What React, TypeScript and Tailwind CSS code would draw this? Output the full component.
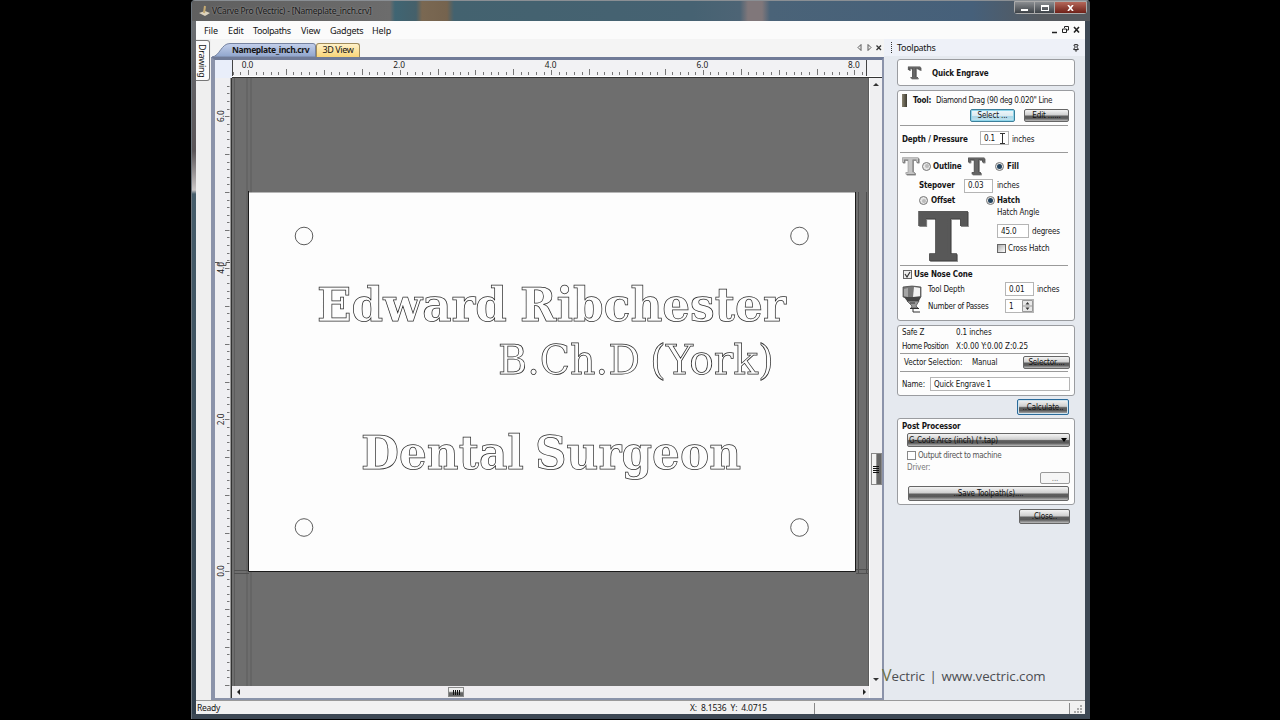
import React from 'react'
import { Pin } from 'lucide-react'

const SCALE = 75.8

// one entry per word so the outlines keep their own spacing
const cutText = [
  { text: 'Edward', x: 317, y: 320.5, size: 46.5, length: 190, bold: true },
  { text: 'Ribchester', x: 520, y: 320.5, size: 46.5, length: 266, bold: true },
  { text: 'B.Ch.D', x: 498, y: 373.5, size: 41, length: 142, bold: false },
  { text: '(York)', x: 650, y: 373.5, size: 41, length: 124, bold: false },
  { text: 'Dental', x: 361, y: 468.5, size: 46.5, length: 163, bold: true },
  { text: 'Surgeon', x: 535, y: 468.5, size: 46.5, length: 206, bold: true },
]

const holes = [[304, 236], [799.5, 236], [304, 527.5], [799.5, 527.5]]

function HRuler() {
  const ticks = Array.from({ length: 84 }, (_, i) => i - 2)
  return (
    <svg width="650" height="18" viewBox="232 60 650 18" className="block bg-[#f2f2f4]">
      {ticks.map(i => {
        const x = Math.round(248 + i * SCALE / 10) + .5
        return <line key={i} x1={x} x2={x} y1={i % 10 === 0 ? 70 : i % 5 === 0 ? 69 : 72} y2="75" stroke="#555" strokeWidth=".8"/>
      })}
      {[0, 2, 4, 6, 8].map(n => (
        <text key={n} x={247.5 + n * SCALE} y="68" fontSize="8.3" textAnchor="middle" fill="#222">{n.toFixed(1)}</text>
      ))}
      <rect x="867" y="60" width="15" height="17" fill="#f3f3f5"/>
      <path d="M866.5 60V77M232.5 60V77" stroke="#444" strokeWidth="1"/>
      <path d="M232 76.5H882" stroke="#fff"/>
      <path d="M232 77.5H882" stroke="#333"/>
    </svg>
  )
}

function VRuler() {
  const ticks = Array.from({ length: 80 }, (_, i) => i - 15)
  return (
    <svg width="17" height="620" viewBox="215 78 17 620" className="block bg-[#efeff2]">
      {ticks.map(i => {
        const y = Math.round(571 - i * SCALE / 10) + .5
        return <line key={i} y1={y} y2={y} x1={i % 5 === 0 ? 225 : 227} x2="229.5" stroke="#555" strokeWidth=".8"/>
      })}
      {[0, 2, 4, 6].map(n => (
        <text key={n} transform={`translate(224 ${571 - n * SCALE}) rotate(-90)`} fontSize="8.3" textAnchor="middle" fill="#222">{n.toFixed(1)}</text>
      ))}
      <path d="M215 262.5h4v3h7v-3h4" stroke="#555" fill="none"/>
      <path d="M230.5 78V698" stroke="#999"/>
      <path d="M231.5 78V698" stroke="#333"/>
    </svg>
  )
}

function Drawing() {
  return (
    <svg width="637" height="608" viewBox="232 78 637 608" className="block bg-[#6e6e6e]">
      <path d="M234.5 78V686M247 78V686M251 78V686M868.5 78V686" stroke="#5c5c5c"/>
      <path d="M858.5 192V574M866.5 192V574" stroke="#4e4e4e"/>
      <path d="M234 570.5H249M234 573.5H249M856 569.5H868M856 573.5H868" stroke="#505050"/>
      <rect x="248.5" y="192.5" width="606.5" height="379" fill="#fdfdfd"/>
      <path d="M248.5 191V571.5H855.5V192" fill="none" stroke="#1a1a1a"/>
      {holes.map(([x, y]) => <circle key={`${x}-${y}`} cx={x} cy={y} r="8.8" fill="none" stroke="#333" strokeWidth=".8"/>)}
      {cutText.map(t => (
        <text key={t.text} x={t.x} y={t.y} fontSize={t.size} textLength={t.length} lengthAdjust="spacingAndGlyphs"
          fontWeight={t.bold ? 700 : 400} fill="#fdfdfd" stroke="#2c2c2c" strokeWidth=".75"
          className="font-['DejaVu_Serif',serif] opacity-99">{t.text}</text>
      ))}
    </svg>
  )
}

function LetterIcon({ w, h, fill, edge = 2 }: { w: number, h: number, fill: string, edge?: number }) {
  return (
    <svg width={w} height={h} viewBox="0 0 50 55" preserveAspectRatio="none" className="block shrink-0 overflow-visible [filter:drop-shadow(0_0_0.6px_#000)_drop-shadow(1px_1px_0_#8a8a8a)]">
      <text x="0.5" y="51.5" fontSize="68" fontWeight="700" textLength="47" lengthAdjust="spacingAndGlyphs" fill={fill} stroke={fill} strokeWidth={edge} className="font-['DejaVu_Serif',serif]">T</text>
    </svg>
  )
}

function NoseCone() {
  return (
    <svg width="21" height="28" viewBox="0 0 21 28" className="block shrink-0">
      <path d="M1 2Q10 0 19 2V12Q10 15 1 12Z" fill="#777" stroke="#444" strokeWidth=".7"/>
      <path d="M12 2L18 3V11L11 12Z" fill="#f2f2f2"/>
      <path d="M2 4L6 3V12L2 11Z" fill="#a5a5a5"/>
      <path d="M2 12L19 12L17 16L5 16Z" fill="#444"/>
      <path d="M5 16H17L14 21L16 23H9L10 21Z" fill="#999" stroke="#444" strokeWidth=".7"/>
      <path d="M8 18H13M8 23.500H17M11 23V27M11 27H18" stroke="#333"/>
    </svg>
  )
}

function Radio({ on = false }: { on?: boolean }) {
  return (
    <span className="w-[9px] h-[9px] shrink-0 rounded-full border border-[#777] bg-[#e6e6e6] flex items-center justify-center">
      <span className={on ? 'w-[5px] h-[5px] rounded-full bg-[#24435e]' : 'w-[4px] h-[4px] rounded-full bg-[#bbb]'}/>
    </span>
  )
}

function Field({ children, className = '' }: { children: React.ReactNode, className?: string }) {
  return <div className={`h-[14px] shrink-0 border border-[#b5b5b5] bg-white flex items-center pl-[3px] ${className}`}>{children}</div>
}

function Btn({ children, className = '' }: { children: React.ReactNode, className?: string }) {
  return (
    <button className={`shrink-0 rounded-[2px] border border-[#666] flex items-center justify-center text-[#111] bg-[linear-gradient(#f4f4f4_0%,#cfcfcf_45%,#5e5e5e_55%,#5a5a5a_75%,#bdbdbd_100%)] ${className}`}>
      {children}
    </button>
  )
}

const card = 'w-[178px] rounded-[3px] border border-[#9a9ca0] bg-[#fdfdfd]'
const rule = 'h-px bg-[#9a9a9a] ml-[2px] mr-[6px]'

function ToolpathPanel() {
  return (
    <div className="w-[201px] h-[661px] bg-[#e5e9ef] text-[8px] leading-[9px] tracking-[-0.15px] font-['DejaVu_Sans_Condensed','DejaVu_Sans',sans-serif]">
      <div className="h-[17px] flex items-center bg-[#eef1f8] pl-[7px] pr-[5px]">
        <span className="h-[11px] border-l border-dotted border-[#333] mr-[5px]"/>
        <span className="text-[9px] tracking-[-0.3px] font-['Noto_Sans',sans-serif]">Toolpaths</span>
        <Pin className="w-[8px] h-[8px] ml-auto" strokeWidth={3}/>
      </div>

      <div className="ml-[13px] mt-[3px]">
        <div className={`${card} h-[27px] flex items-center pl-[10px] pt-px`}>
          <LetterIcon w={13} h={12} fill="#666"/>
          <b className="ml-[11px] pt-px">Quick Engrave</b>
        </div>

        {/* Tool settings */}
        <div className={`${card} h-[231px] mt-[4px]`}>
          <div className="h-[18px] flex items-center pl-[4px]">
            <span className="w-[5px] h-[13px] bg-[linear-gradient(90deg,#8a8471,#3d3a30)]"/>
            <b className="ml-[6px] w-[23px]">Tool:</b>
            <span className="tracking-[-0.3px]">Diamond Drag (90 deg 0.020" Line</span>
          </div>
          <div className="h-[16px] flex items-start pl-[72px] gap-[9px]">
            <button className="w-[45px] h-[13px] rounded-[2px] border border-[#3c7f9a] flex items-center justify-center bg-[linear-gradient(#eef8fc_0%,#dcebf1_50%,#a9d5e6_60%,#c6e6f0_100%)] shadow-[inset_0_0_0_1px_#8ed5ea]">Select ...</button>
            <Btn className="w-[45px] h-[13px]">Edit ......</Btn>
          </div>
          <div className={rule}/>
          <div className="h-[26px] flex items-center pl-[4px]">
            <b className="w-[78px] tracking-0">Depth / Pressure</b>
            <Field className="w-[29px] relative -top-px">0.1
              <svg width="5" height="11" className="absolute left-[19px] top-[1px]"><path d="M0 .5H5M0 10.5H5M2.5 0V11" stroke="#333" strokeWidth="1"/></svg>
            </Field>
            <span className="ml-[3px]">inches</span>
          </div>
          <div className={rule}/>
          <div className="h-[25px] flex items-center pl-[4px] pt-px">
            <LetterIcon w={17} h={18} fill="#c4c4c4"/>
            <span className="w-[3px]"/>
            <Radio/>
            <b className="ml-[2px] w-[35px]">Outline</b>
            <LetterIcon w={17} h={18} fill="#666"/>
            <span className="w-[10px]"/>
            <Radio on/>
            <b className="ml-[3px]">Fill</b>
          </div>
          <div className="h-[15px] flex items-center pl-[21px]">
            <b className="w-[45px]">Stepover</b>
            <Field className="w-[29px]">0.03</Field>
            <span className="ml-[4px]">inches</span>
          </div>
          <div className="h-[15px] flex items-center pl-[21px]">
            <Radio/>
            <b className="ml-[3px] w-[55px]">Offset</b>
            <Radio on/>
            <b className="ml-[2px]">Hatch</b>
          </div>
          <div className="h-[57px] flex pl-[21px]">
            <div className="mt-[2px] w-[78px]"><LetterIcon w={50} h={52} fill="#585858" edge={3.5}/></div>
            <div>
              <div className="h-[10px] leading-[10px]">Hatch Angle</div>
              <div className="flex items-center mt-[6px]">
                <Field className="w-[32px]">45.0</Field>
                <span className="ml-[3px]">degrees</span>
              </div>
              <div className="flex items-center mt-[6px]">
                <span className="w-[9px] h-[9px] border border-[#666] bg-[linear-gradient(135deg,#aaa,#fff)]"/>
                <span className="ml-[2px]">Cross Hatch</span>
              </div>
            </div>
          </div>
          <div className={rule}/>
          <div className="h-[15px] flex items-center pl-[5px] pt-px">
            <span className="w-[9px] h-[9px] border border-[#666] bg-[#eee] flex items-center justify-center">
              <svg width="7" height="7" viewBox="0 0 7 7"><path d="M1 3L3 6L6 1" stroke="#333" strokeWidth="1.2" fill="none"/></svg>
            </span>
            <b className="ml-[2px]">Use Nose Cone</b>
          </div>
          <div className="flex pl-[4px] pt-px">
            <div className="pt-[3px] w-[26px]"><NoseCone/></div>
            <div>
              <div className="flex items-center h-[14px]">
                <span className="w-[77px]">Tool Depth</span>
                <Field className="w-[29px]">0.01</Field>
                <span className="ml-[3px]">inches</span>
              </div>
              <div className="flex items-center h-[14px] mt-[3px]">
                <span className="w-[77px] tracking-[-0.25px]">Number of Passes</span>
                <Field className="w-[29px]">1
                  <svg width="11" height="12" viewBox="0 0 11 12" className="ml-auto bg-[#e8e8e8]">
                    <path d="M.5 .5H10.5V11.5H.5ZM0 6H11" fill="none" stroke="#999"/>
                    <path d="M3.5 4.5H7.5L5.5 2ZM3.5 7.5H7.5L5.5 10Z" fill="#333"/>
                  </svg>
                </Field>
              </div>
            </div>
          </div>
        </div>

        {/* Position and name */}
        <div className={`${card} h-[71px] mt-[4px]`}>
          <div className="h-[13px] flex items-center pl-[4px]"><span className="w-[54px]">Safe Z</span>0.1 inches</div>
          <div className="h-[14px] flex items-center pl-[4px]"><span className="w-[54px] tracking-[-0.4px]">Home Position</span><span className="tracking-[-0.05px]">X:0.00 Y:0.00 Z:0.25</span></div>
          <div className={rule}/>
          <div className="h-[17px] flex items-center pl-[6px]">
            <span className="w-[68px]">Vector Selection:</span>
            <span className="w-[51px]">Manual</span>
            <Btn className="w-[47px] h-[13px]">Selector....</Btn>
          </div>
          <div className={rule}/>
          <div className="h-[22px] flex items-center pl-[4px] pt-[2px]">
            <span className="w-[28px]">Name:</span>
            <Field className="w-[140px]">Quick Engrave 1</Field>
          </div>
        </div>

        <Btn className="w-[52px] h-[16px] mt-[3px] ml-[120px] border-[#2a6a9a]! shadow-[inset_0_0_0_1px_#cfe3ee]">..Calculate..</Btn>

        {/* Post processor */}
        <div className={`${card} h-[87px] mt-[3px]`}>
          <div className="h-[14px] flex items-center pl-[4px]"><b className="tracking-0">Post Processor</b></div>
          <Btn className="w-[163px] h-[14px] ml-[9px] justify-start! pl-[1px]">
            <span>G-Code Arcs (inch) (*.tap)</span>
            <span className="ml-auto mr-[2px] border-x-[3px] border-x-transparent border-t-[4px] border-t-black"/>
          </Btn>
          <div className="h-[16px] flex items-center pl-[9px] text-[#555] tracking-[-0.3px]">
            <span className="w-[9px] h-[9px] border border-[#888] bg-white mr-[2px]"/>Output direct to machine
          </div>
          <div className="h-[9px] leading-[9px] pl-[9px] text-[#777]">Driver:</div>
          <div className="w-[30px] h-[12px] ml-[142px] rounded-[2px] border border-[#999] bg-[#f6f6f6] flex items-center justify-center text-[#777]">...</div>
          <Btn className="w-[161px] h-[15px] ml-[10px] mt-[2px]">..Save Toolpath(s)....</Btn>
        </div>

        <Btn className="w-[51px] h-[15px] mt-[4px] ml-[122px]">.Close..</Btn>
      </div>
    </div>
  )
}

function TitleBar() {
  return (
    <div className="h-[21px] flex items-center pl-[6px] pr-[3px] border-t border-[#8a8f94] bg-[linear-gradient(90deg,#5f5f5f_0px,#6c6c6c_198px,#3f6573_203px,#45606a_224px,#7a6852_230px,#75634e_255px,#43626f_262px,#466272_500px,#4d6475_548px,#80777a_556px,#80777a_570px,#4a6378_578px,#46607a_780px,#55595e_850px)]">
      <svg width="13" height="12" viewBox="0 0 13 12" className="block"><path d="M1 8L7 11L12 8L7 6Z" fill="#ddd3bd"/><path d="M7 1L6 8" stroke="#c5aa71" strokeWidth="2"/></svg>
      <span className="text-[8.5px] tracking-[-0.22px] ml-px text-[#161616] [text-shadow:0_0_2px_#aaa]">VCarve Pro (Vectric) - [Nameplate_inch.crv]</span>
      <div className="ml-auto flex self-start h-[13px] rounded-b-[3px] border border-[#aaa] text-white">
        <span className="w-[20px] bg-[linear-gradient(#8a8d91,#3d4247)] border-r border-[#aaa] flex items-center justify-center"><i className="w-[7px] h-[2px] bg-white mt-[5px]"/></span>
        <span className="w-[20px] bg-[linear-gradient(#8a8d91,#3d4247)] border-r border-[#aaa] flex items-center justify-center"><i className="w-[8px] h-[6px] border border-t-2 border-white"/></span>
        <span className="w-[31px] bg-[linear-gradient(#b5685a,#6e2018)] flex items-center justify-center"><svg width="7" height="6" viewBox="0 0 7 6"><path d="M1 0L6 6M6 0L1 6" stroke="#fff" strokeWidth="1.6"/></svg></span>
      </div>
    </div>
  )
}

export default function App() {
  return (
    <div className="w-[1280px] h-[720px] bg-black overflow-hidden flex justify-start pl-[191px] font-['Noto_Sans',sans-serif] text-[#151515] leading-none whitespace-nowrap relative">
      <div className="w-[899px] h-[719px] rounded-t-[4px] overflow-hidden bg-[#3d4854] border-l border-[#6c757d]">
        <TitleBar/>
        <div className="flex">
          <div className="w-[4px] bg-[linear-gradient(#6b6e72_0px,#5a5558_130px,#c9c5c5_169px,#465d6b_173px,#33414e_690px)]"/>
          <div className="w-[889px] h-[693px] bg-[#f4f4f4]">
            <div className="h-[18px] bg-[#fbfbfb] flex items-center text-[9px] pl-[8px] pr-[5px] tracking-[-0.1px]">
              <span className="w-[24px]">File</span>
              <span className="w-[25px]">Edit</span>
              <span className="w-[48px] tracking-[-0.4px]">Toolpaths</span>
              <span className="w-[29px]">View</span>
              <span className="w-[42px] tracking-[-0.3px]">Gadgets</span>
              <span>Help</span>
              <svg width="30" height="9" viewBox="0 0 30 9" className="ml-auto relative -top-px" fill="none" stroke="#222">
                <path d="M2 7.5H7" strokeWidth="1.5"/><path d="M14.5 3V1.5H18.5V5H17M12.5 4H16.5V7.5H12.5Z"/><path d="M24 2L29 7.5M29 2L24 7.5" strokeWidth="1.6"/>
              </svg>
            </div>
            <div className="flex h-[661px]">
              <div className="w-[15px] bg-[#efefef] pt-px">
                <div className="w-[14px] h-[41px] border border-l-0 border-[#777] rounded-r-[3px] bg-[#fbfbfb] flex items-center justify-center"><span className="[writing-mode:vertical-rl] text-[9px] tracking-[-0.3px]">Drawing</span></div>
              </div>

              {/* Document window */}
              <div className="w-[673px]">
                <div className="h-[18px] flex items-end pr-[2px]">
                  <div className="relative w-[104px] h-[14px] ml-[1px]">
                    <svg width="104" height="14" className="absolute inset-0"><defs><linearGradient id="tab" x2="0" y2="1"><stop stopColor="#c4d0ec"/><stop offset="1" stopColor="#8fa4cb"/></linearGradient></defs><path d="M0 14C8 13 9 .5 18 .5H101Q103.5 .5 103.5 3V14Z" fill="url(#tab)" stroke="#7683a0"/></svg>
                    <b className="absolute left-[20px] top-[3px] text-[8.5px] tracking-[-0.38px]">Nameplate_inch.crv</b>
                  </div>
                  <div className="w-[44px] h-[14px] border border-[#a08c5c] border-b-0 rounded-t-[3px] bg-[linear-gradient(#fff1c8,#f9d578)] flex items-center justify-center text-[9px] tracking-[-0.4px] pb-[2px]">3D View</div>
                  <svg width="25" height="9" viewBox="0 0 25 9" className="ml-auto mb-[5px]" fill="none" stroke="#333">
                    <path d="M4 1.5V7.5L1 4.5ZM11 1.5V7.5L14 4.5Z" strokeWidth=".8"/><path d="M19.5 2.5L24 7M24 2.5L19.5 7" strokeWidth="1.3"/>
                  </svg>
                </div>
                <div className="border-[3px] border-l-[4px] border-r-[2px] border-[#8b93aa] border-t-[#707b97] w-[673px] h-[643px] flex">
                  <div className="w-[17px]">
                    <div className="h-[18px] bg-[#e9eefa]"/>
                    <VRuler/>
                  </div>
                  <div className="w-[650px]">
                    <HRuler/>
                    <div className="flex">
                      <div className="w-[637px]">
                        <Drawing/>
                        <div className="h-[12px] bg-[#efedf0] flex items-center px-[3px]">
                          <span className="border-y-[3px] border-y-transparent border-r-[3px] border-r-[#222] ml-[2px]"/>
                          <span className="ml-[208px] w-[16px] h-[10px] border border-[#888] bg-[linear-gradient(#eee_40%,#666_60%)] flex items-center justify-center gap-px">
                            <i className="w-px h-[5px] bg-[#111]"/><i className="w-px h-[5px] bg-[#111]"/><i className="w-px h-[5px] bg-[#111]"/><i className="w-px h-[5px] bg-[#111]"/>
                          </span>
                          <span className="border-y-[3px] border-y-transparent border-l-[3px] border-l-[#222] ml-auto"/>
                        </div>
                      </div>
                      <div className="w-[13px] h-[620px] bg-[#efeff1] flex flex-col items-center border-l border-white">
                        <span className="mt-[5px] border-x-[3px] border-x-transparent border-b-[3px] border-b-[#333]"/>
                        <span className="mt-[367px] w-[11px] h-[32px] border border-[#888] bg-[linear-gradient(90deg,#f2f2f2_40%,#666_55%)] flex flex-col items-center justify-center gap-px">
                          <i className="w-[6px] h-px bg-[#111]"/><i className="w-[6px] h-px bg-[#111]"/><i className="w-[6px] h-px bg-[#111]"/><i className="w-[6px] h-px bg-[#111]"/>
                        </span>
                        <span className="mt-[193px] border-x-[3px] border-x-transparent border-t-[3px] border-t-[#333]"/>
                      </div>
                    </div>
                  </div>
                </div>
              </div>
              <ToolpathPanel/>
            </div>
            <div className="h-[14px] bg-[#f1f1f1] border-t border-[#999] flex items-center pl-[1px] pt-px text-[8.5px]">
              <span className="w-[493px] tracking-[-0.3px]">Ready</span>
              <span className="w-[124px] tracking-[-0.18px]">X:&nbsp; 8.1536&nbsp; Y:&nbsp; 4.0715</span>
              <span className="w-[256px] h-[11px] border-x border-[#888]"/>
              <svg width="9" height="9" className="ml-[4px]"><path d="M6 1h2v2H6zM3 4h2v2H3zM6 4h2v2H6zM0 7h2v2H0zM3 7h2v2H3zM6 7h2v2H6z" fill="#aaa"/></svg>
            </div>
          </div>
        </div>
      </div>

      {/* Watermark */}
      <div className="absolute left-[882px] top-[667px] text-[13.3px] leading-[16px] text-[#4c4e52] font-medium font-['Open_Sans',sans-serif] tracking-[-0.05px] [word-spacing:1.2px]">
        <span className="text-[#6c7044] text-[16px]">V</span>ectric | www.vectric.com
      </div>
    </div>
  )
}
